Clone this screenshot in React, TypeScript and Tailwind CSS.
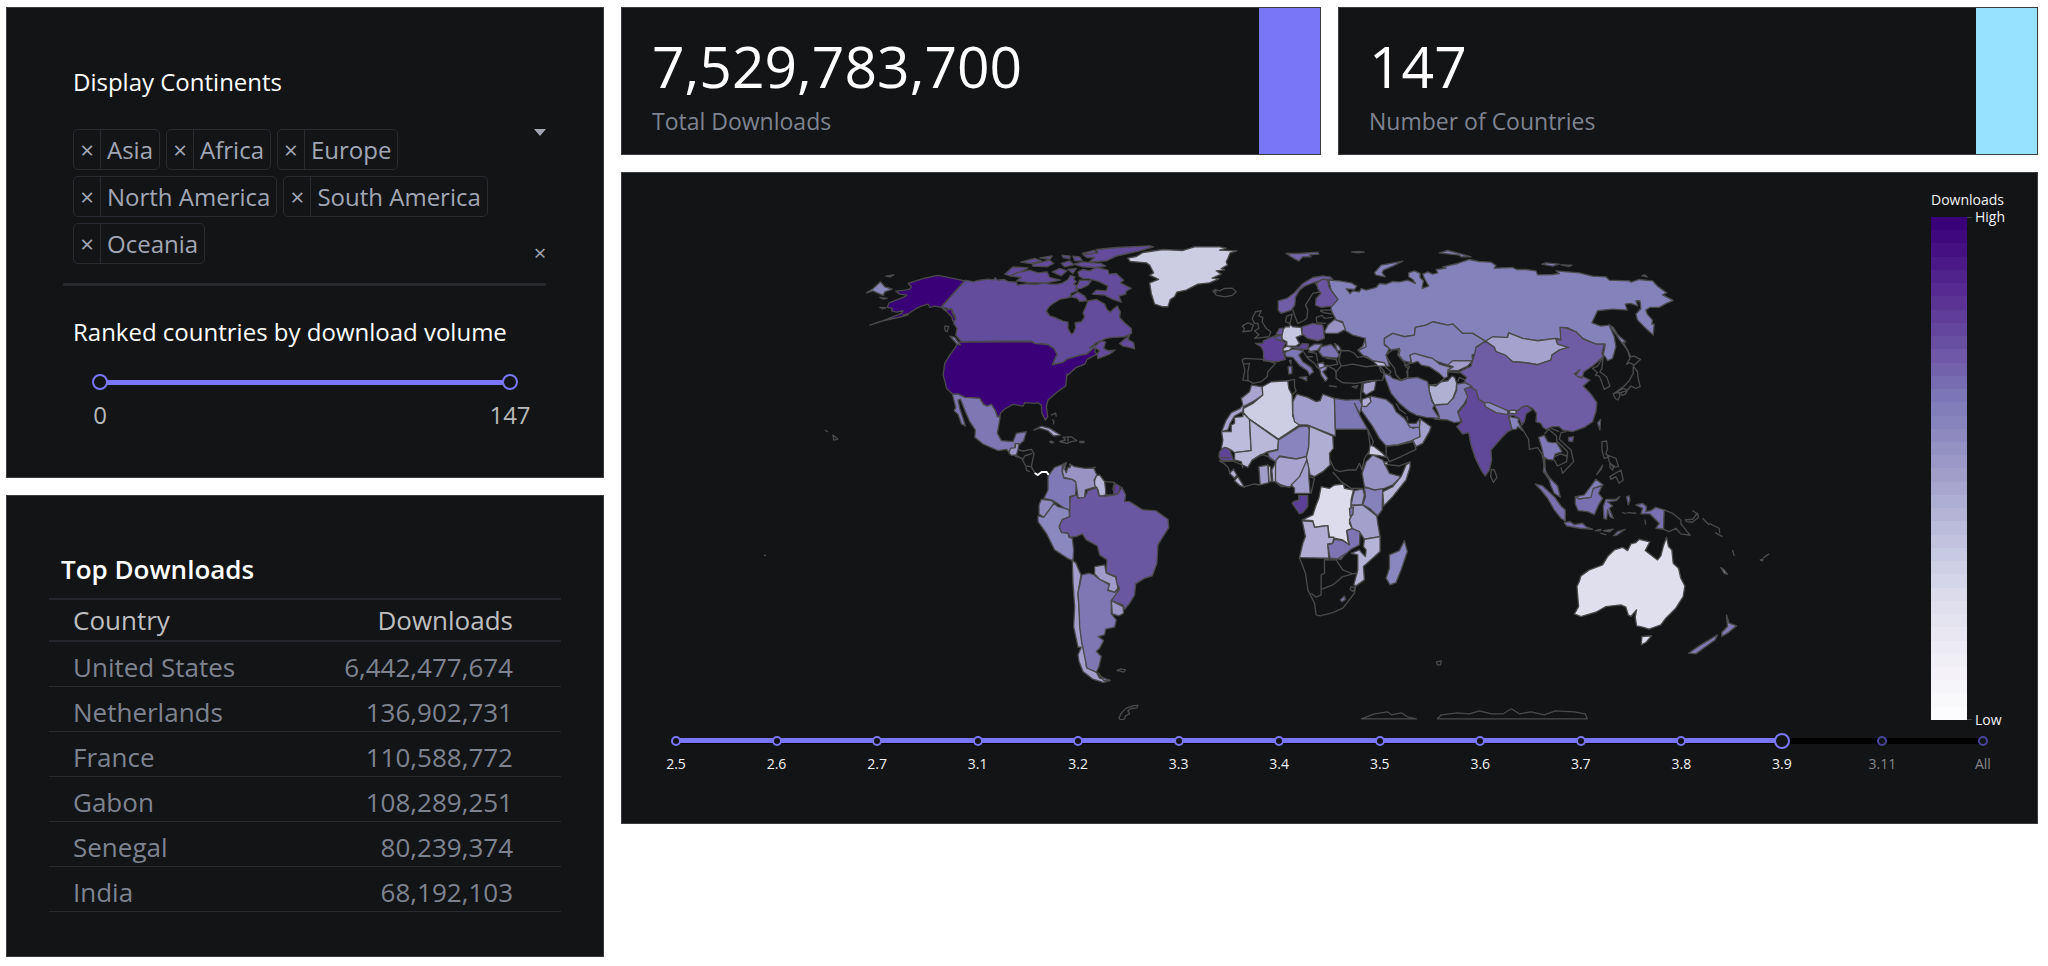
import React, { useState } from 'react';

type Shape = [fill: string, d: string];
type MapTile = { transform: string; shapes: Shape[] };

const NONE = 'none';

const tiles: MapTile[] = [
  {
    transform: 'translate(850 220) scale(0.33333)',
    shapes: [
      ['#634c9b', 'M347,180 372,185 385,181 415,177 432,179 437,173 443,180 462,178 475,184 500,186 503,195 530,191 560,193 585,189 600,192 625,192 640,188 655,178 662,166 676,170 672,178 680,184 672,192 688,200 682,212 665,218 660,232 630,238 610,250 598,260 590,272 600,287 615,292 640,303 655,306 655,325 664,341 672,338 678,322 676,308 695,305 705,290 700,278 708,262 715,242 740,238 765,252 772,268 782,276 790,268 803,258 812,275 810,292 825,308 845,325 846,340 825,350 790,352 770,355 740,368 720,384 738,376 755,362 768,366 762,385 775,392 797,390 780,402 745,416 742,402 750,392 738,384 730,385 712,402 690,406 650,418 640,427 608,434 622,402 612,385 595,374 555,370 545,363 335,365 318,345 322,325 312,310 318,290 305,268 275,260Z'],
      ['#3a0078', 'M345,182 275,260 290,270 305,266 308,280 318,298 310,304 306,290 292,276 275,262 255,258 240,262 235,252 215,258 200,265 180,278 160,285 175,284 155,290 100,302 60,315 110,298 155,280 160,272 140,276 125,272 128,265 112,262 118,248 160,232 172,225 150,222 138,213 165,210 180,207 185,200 175,190 205,180 225,174 265,166 310,175Z'],
      ['#3a0078', 'M322,372 330,366 545,365 555,370 595,374 612,385 622,402 608,434 640,427 650,418 690,406 712,402 730,385 738,384 735,395 742,402 712,418 706,432 680,442 665,455 655,465 652,462 648,498 620,518 595,540 590,560 594,590 587,600 577,580 575,555 565,548 555,550 525,548 520,558 490,553 465,567 452,580 450,592 442,586 435,570 425,553 415,558 405,557 390,535 345,532 325,522 308,522 290,505 286,485 280,465 285,430 300,405 315,385Z'],
      ['#7f77b4', 'M308,523 325,522 345,532 390,535 400,552 412,558 425,553 437,572 443,590 451,592 443,640 455,662 490,665 500,640 530,635 522,662 510,672 497,672 495,685 480,698 470,688 445,692 400,672 375,652 377,630 360,605 345,570 332,537 325,540 330,565 340,595 347,618 335,612 325,583 313,572 318,562Z'],
      ['#9b97c8', 'M497,670 508,672 505,688 500,705 485,706 478,700 482,685 497,683Z'],
      [NONE, 'M507,690 520,693 545,688 553,700 545,740 M500,706 520,718 525,708 548,700 M515,714 528,738 545,740 556,760 M528,742 532,752 540,755 M508,712 496,708'],
      ['#a8a5cf', 'M552,630 575,618 600,625 632,645 612,648 595,632 570,624Z'],
      ['#a8a5cf', 'M600,665 606,663 612,667 606,669Z'],
      [NONE, 'M630,664 648,660 640,652 665,650 682,662 665,665 652,670 635,666Z M655,652 655,665 M690,664 703,664 703,668 692,668Z M604,585 618,579 620,590 M608,598 613,604 611,613'],
      ['#634c9b', 'M810,370 840,345 835,358 852,368 855,386 840,382 820,378Z'],
      ['#634c9b', 'M465,162 490,140 535,143 515,155 505,165 485,168Z'],
      ['#634c9b', 'M480,167 505,157 540,150 565,158 592,155 600,172 632,180 590,188 545,188 500,182 515,172Z'],
      ['#634c9b', 'M513,126 555,115 575,122 545,130Z M548,133 600,120 612,130 592,140 550,138Z M570,113 608,107 600,118Z M637,105 662,108 660,116 640,112Z M635,130 660,122 672,134 645,140Z M608,155 630,145 652,152 635,167Z M670,108 690,110 698,122 675,122Z M655,148 680,145 670,160Z'],
      ['#634c9b', 'M740,88 800,82 900,77 912,80 870,92 835,100 800,108 770,122 720,125 735,112 712,112 700,104 745,98Z'],
      ['#634c9b', 'M672,132 700,125 755,130 768,138 740,142 700,140Z M698,100 735,90 740,98 718,102Z'],
      ['#634c9b', 'M685,155 700,148 720,152 740,142 775,150 778,162 800,160 822,180 812,188 845,205 830,212 828,222 808,228 815,246 790,238 765,225 728,222 740,210 770,212 775,198 750,185 720,176 700,175 688,168Z'],
      ['#634c9b', 'M690,180 725,182 715,195 695,205 678,207Z M662,230 685,216 705,228 712,242 690,244 682,234Z'],
      ['#7f77b4', 'M300,348 315,352 332,375 322,372 Z'],
      [NONE, 'M285,318 297,319 292,335 286,332Z'],
      ['#8a87bf', 'M50,218 70,205 92,185 105,200 127,207 105,215 100,226 82,218 70,212Z'],
      ['#634c9b', 'M108,168 132,164 122,170Z M90,232 112,235 100,237Z M90,262 108,263 98,266Z'],
    ],
  },
  {
    transform: 'translate(1000 440) scale(0.33333)',
    shapes: [
      ['#7f7ab7', 'M145,110 155,95 165,82 185,75 200,68 188,78 187,95 193,115 218,118 230,128 228,165 210,170 212,205 205,210 195,205 165,185 155,180 133,175 145,150Z'],
      ['#9893c3', 'M200,68 192,80 188,95 193,112 218,118 228,125 232,150 235,172 245,176 255,172 257,150 290,140 283,120 292,105 282,84 255,85 225,80 210,72 212,82 204,84 200,98 195,88Z'],
      ['#b6b5d9', 'M290,108 300,105 315,125 318,150 318,165 300,170 295,150 285,135 285,122Z'],
      [NONE, 'M315,125 345,127 340,145 345,165 320,165 M280,82 288,82'],
      ['#5c3f98', 'M345,130 362,140 355,162 342,164Z'],
      ['#6a57a1', 'M255,172 265,152 292,143 298,168 320,168 345,165 355,162 367,142 378,165 375,185 390,185 430,210 468,212 505,238 508,262 490,290 475,315 472,370 458,408 435,415 408,432 405,465 390,490 375,508 370,495 335,482 360,445 350,430 350,410 320,398 322,360 300,345 293,318 260,300 248,282 230,290 210,292 205,280 185,278 178,260 188,238 210,230 212,172 230,165 236,175Z'],
      ['#8d88be', 'M118,195 125,178 155,182 163,188 155,205 145,215 132,232 118,222Z'],
      ['#8b87bf', 'M115,228 132,232 145,215 163,190 175,200 195,205 208,210 210,230 188,238 178,260 185,278 205,280 208,292 218,295 222,330 220,362 205,356 165,330 140,280 115,245Z'],
      ['#a39ecb', 'M218,362 228,368 244,405 235,460 238,500 242,560 247,610 258,650 260,680 290,697 300,715 330,722 310,728 280,718 250,695 238,665 235,645 245,622 235,622 230,598 222,560 225,500 220,430Z'],
      ['#7e77b4', 'M247,405 268,400 283,405 300,418 330,435 325,452 345,457 360,448 335,482 335,522 350,540 345,562 318,568 315,585 296,590 312,602 300,625 290,635 305,650 298,680 290,697 262,685 255,650 245,600 240,560 238,500 235,460Z'],
      ['#8b87bf', 'M297,700 305,712 332,722 312,722Z'],
      ['#a09bc9', 'M285,380 315,375 320,400 348,412 355,445 345,457 325,450 330,432 300,418 285,402Z'],
      ['#9b96c6', 'M335,482 370,500 372,520 358,528 338,522Z'],
      [NONE, 'M352,692 363,687 378,690 372,697 362,694Z M358,835 365,820 380,805 400,798 415,796 412,804 395,806 385,812 390,822 378,828 375,838 362,840Z'],
    ],
  },
  {
    transform: 'translate(1380 240) scale(0.33333)',
    shapes: [
      ['#8581ba', 'M-152,120 -120,122 -85,128 -68,138 -75,148 -100,146 -88,160 -80,152 -60,155 -55,145 -40,150 -10,142 0,130 20,132 40,124 60,125 85,120 108,130 100,118 88,110 88,98 105,92 122,100 122,112 132,122 128,145 148,138 135,115 130,102 145,95 160,102 175,98 170,88 200,84 190,80 235,70 270,58 300,64 335,66 350,76 345,84 400,82 412,88 440,88 470,92 475,104 520,103 540,100 530,92 600,98 640,108 680,110 690,120 750,122 755,126 780,118 820,122 835,138 862,158 850,164 882,181 865,188 840,202 812,202 800,210 804,222 820,240 818,252 825,252 822,285 800,265 775,240 770,222 785,205 782,182 770,182 776,198 755,190 738,192 744,210 700,207 655,212 638,248 665,258 690,255 705,290 710,320 700,355 685,362 678,350 672,345 678,312 650,312 610,295 590,275 565,263 545,262 545,298 530,295 475,302 430,295 388,278 385,292 318,303 280,280 250,280 220,252 205,255 160,245 140,255 108,262 105,285 75,290 40,280 15,295 15,315 30,325 20,345 30,378 15,378 -20,362 -45,350 -65,330 -50,318 -42,295 -80,285 -105,270 -110,245 -130,240 -145,210 -145,190 -125,178 -145,150Z'],
      ['#8581ba', 'M-10,105 -15,98 5,75 70,63 40,78 12,90 8,98 18,110Z'],
      ['#8581ba', 'M180,38 205,31 240,40 275,50 245,50 240,45Z M488,72 500,68 540,72 520,78Z M545,74 578,75 570,79Z M788,107 796,104 804,110Z'],
      ['#8581ba', 'M690,254 702,262 716,285 740,305 732,306 746,332 722,300Z'],
      ['#827eb8', 'M15,295 40,280 75,290 105,285 108,262 140,255 160,245 205,255 220,252 250,280 280,280 318,303 290,322 290,340 278,345 280,362 240,365 205,375 175,365 140,350 105,342 92,345 95,368 70,362 55,345 60,325 35,330 15,312Z'],
      ['#8e89c0', 'M92,345 105,340 140,350 160,355 180,372 200,378 225,385 205,395 205,410 195,415 180,400 150,380 125,375 115,364 97,370Z'],
      ['#a09bc9', 'M205,375 220,362 280,362 265,378 235,392 205,390 222,380Z'],
      [NONE, 'M20,345 40,328 62,330 58,345 72,362 78,372 90,380 82,395 85,412 65,420 50,405 45,385 28,362Z M95,370 75,375 85,385 85,415 110,412 150,435 175,432 195,415 M205,395 250,398 M235,425 240,412 258,420'],
      ['#a5a2cd', 'M318,303 340,290 385,292 388,278 430,295 475,302 530,295 535,312 568,322 540,330 518,345 515,360 475,374 440,368 400,365 375,345 350,335 345,322Z'],
      ['#6e5da5', 'M318,303 345,322 350,335 378,345 400,365 440,368 475,374 515,360 518,345 540,330 568,322 535,312 530,298 545,300 542,262 560,264 590,275 612,297 650,312 675,312 668,340 672,350 655,365 640,378 614,395 608,415 590,406 602,388 585,402 600,412 612,410 632,420 612,438 635,462 653,488 650,515 640,545 615,562 580,575 550,570 540,560 520,560 500,568 490,560 485,550 470,545 472,520 460,505 445,498 430,500 415,512 385,512 345,505 318,490 298,478 290,460 275,438 255,425 262,412 240,395 275,378 285,345 290,322Z'],
      ['#614999', 'M255,445 270,440 290,450 298,478 315,488 318,498 350,515 385,522 388,512 415,512 430,500 445,498 457,510 440,522 435,545 428,555 420,535 400,525 388,530 395,560 400,568 385,575 370,590 335,630 337,660 330,690 318,708 308,695 288,655 275,615 268,578 250,582 232,560 248,545 235,520 260,490 262,465Z'],
      ['#8d88bf', 'M315,488 330,488 385,512 385,524 350,518 318,500Z'],
      ['#c0c0dd', 'M390,512 408,510 412,520 392,520Z'],
      ['#8783bc', 'M388,528 400,532 418,535 416,545 422,555 430,572 416,560 410,568 398,568Z'],
      ['#827db7', 'M165,537 180,530 175,515 165,495 200,492 210,480 222,475 232,450 232,432 255,428 278,438 255,447 265,470 255,490 235,515 245,545 225,548 205,540Z'],
      ['#b0b0d3', 'M148,450 150,435 170,438 185,425 205,422 218,408 226,412 232,430 230,450 220,475 205,492 165,495 158,480Z'],
      [NONE, 'M745,330 755,350 765,348 784,358 765,375 752,368 742,372 752,355Z M762,378 775,395 776,410 783,440 770,445 755,438 745,450 732,445 715,455 705,460 735,438 750,422 762,400Z M702,460 720,458 722,468 716,480 708,475Z M724,458 744,452 738,462 728,466Z M640,385 655,378 672,350 668,385 662,395 682,410 692,438 675,448 665,420 660,408 648,405 655,398Z M336,688 345,690 353,712 342,727 334,710Z'],
    ],
  },
  {
    transform: 'translate(1200 260) scale(0.33333)',
    shapes: [
      [NONE, 'M40,92 50,96 45,88 60,92 75,85 98,84 110,95 98,106 75,110 50,105Z'],
      ['#6f5da6', 'M236,122 236,150 245,160 275,150 286,135 288,110 300,90 315,78 340,68 355,64 370,58 400,58 392,50 370,47 340,52 310,70 285,98 262,115Z'],
      [NONE, 'M280,148 285,165 295,190 312,182 322,175 325,150 318,135 340,100 362,95 M355,80 345,65'],
      ['#6a55a0', 'M352,68 370,57 385,60 388,80 398,95 415,118 398,138 365,142 348,135 350,115 364,100 355,85Z'],
      ['#7d77b4', 'M552,340 570,345 580,355 605,362 625,355 655,352 685,365 690,395 698,425 705,435 700,445 720,475 680,472 650,465 630,455 600,430 575,400Z'],
      ['#8c88c0', 'M515,408 560,418 580,435 590,455 615,475 625,490 640,505 660,500 662,530 650,538 595,555 560,558 540,535 520,500 485,450 485,430 505,435Z'],
      [NONE, 'M560,558 595,555 642,545 650,568 600,592 570,605 560,585Z M590,430 600,448 620,462 M622,468 626,482'],
      ['#a4a0cc', 'M662,476 695,500 690,515 670,550 650,560 640,540 662,530 660,500Z'],
      ['#8883bc', 'M625,490 650,490 662,475 660,502 632,502Z'],
      ['#a4a0cb', 'M492,370 530,362 525,390 500,405 490,395Z'],
      ['#b0acd3', 'M488,418 510,410 515,425 500,440 487,438Z'],
      [NONE, 'M488,368 484,400 484,450 M410,335 425,318 460,312 500,320 540,315 555,335 550,360 510,362 470,370 430,368 410,355Z M458,380 475,377 470,384Z M388,377 412,380 M520,302 500,288 475,292 465,280 450,272 425,272 418,300 425,318 M478,270 500,260 498,240 M555,318 575,335 568,345 545,335 540,320'],
      ['#bab8d9', 'M520,302 555,308 560,318 535,318Z'],
      ['#6a55a0', 'M308,200 340,190 370,195 375,235 355,242 325,235 308,222Z'],
      ['#c6c6e0', 'M250,208 258,200 270,200 270,192 280,200 305,202 308,225 290,232 300,250 290,258 262,258 262,245 248,238 247,222Z'],
      ['#5f4297', 'M168,250 190,250 192,242 215,232 232,225 240,240 258,248 250,265 250,275 258,298 235,305 192,302 192,275 185,260Z'],
      ['#6750a0', 'M230,222 240,205 252,205 248,225Z'],
      ['#6750a0', 'M222,230 245,226 248,240 238,240Z'],
      ['#c3c2de', 'M250,266 262,258 278,262 270,272 252,273Z'],
      ['#5f4598', 'M278,262 300,260 308,250 328,252 322,268 290,266Z'],
      ['#8883bd', 'M325,265 345,252 368,252 355,270 332,275Z'],
      ['#7b72b1', 'M365,260 395,253 410,268 420,285 412,294 370,290 358,275Z'],
      ['#9b96c6', 'M405,250 418,258 425,270 415,272Z'],
      ['#9893c3', 'M375,215 385,195 405,178 430,188 438,208 415,220 380,220Z'],
      [NONE, 'M352,188 350,172 368,166 375,175 400,172 M362,150 395,150 M362,152 375,158 398,162 M352,188 380,190'],
      ['#7e77b5', 'M255,278 275,268 290,268 312,272 298,285 310,305 335,322 342,336 330,345 324,332 300,316 280,292 260,290Z'],
      ['#7e77b5', 'M300,352 322,350 322,362Z M266,320 277,318 277,340 268,342Z M270,302 275,300 274,312Z'],
      ['#8e89c0', 'M360,325 385,315 380,328 370,335 385,355 378,364 365,345Z'],
      ['#a4a0cb', 'M355,310 372,308 376,320 358,326Z'],
      [NONE, 'M312,275 325,295 345,310 355,325 M325,275 350,280 355,305 M320,290 340,290 M380,295 410,298 415,312 385,318 M385,318 405,328 412,340'],
      [NONE, 'M128,300 135,295 190,298 228,310 205,335 203,350 185,365 160,370 148,362 130,360 136,330Z M150,310 145,335 145,360 M132,312 152,310'],
      [NONE, 'M168,155 185,152 178,168 190,172 188,185 200,205 214,215 208,230 165,235 178,224 165,212 178,205 175,190 165,190 158,175Z M130,215 135,205 128,198 145,188 162,195 155,212Z M258,185 262,168 278,162 272,190Z'],
      ['#a8a4cf', 'M188,380 190,405 160,425 132,440 130,455 105,468 92,490 85,510 66,515 80,480 95,458 122,445 130,435 125,415 150,395 156,375 175,378Z'],
      ['#bdbcdc', 'M66,515 95,515 95,495 105,490 105,472 130,470 130,458 150,478 155,572 105,578 95,570 80,563 65,568 70,540Z'],
      ['#cdcde3', 'M188,380 215,365 265,362 268,385 278,405 280,470 300,495 237,537 150,478 132,458 132,445 160,430 190,405Z'],
      [NONE, 'M265,362 285,358 285,380 290,392 278,405'],
      ['#a29ecb', 'M280,425 292,402 325,412 350,425 362,422 370,402 405,415 408,528 325,495 300,495 285,485 280,460Z'],
      ['#7e77b6', 'M405,415 440,420 480,418 488,435 480,460 465,430 482,468 505,508 408,508Z'],
      ['#b9b8d9', 'M150,478 237,540 235,568 205,575 175,590 158,600 145,622 128,615 125,605 105,600 105,578 155,572Z'],
      ['#8984bd', 'M237,540 300,500 325,498 330,510 328,560 320,590 290,597 240,588 228,605 210,595 205,578 235,570Z'],
      ['#b0aed3', 'M330,498 400,528 402,565 390,580 392,615 370,635 345,650 332,645 320,595 328,560Z'],
      ['#5f4598', 'M60,575 75,562 90,568 102,602 65,602 58,590Z'],
      [NONE, 'M62,595 75,592 90,594 M408,508 505,508 522,545 512,570 495,595 488,630 480,610 470,630 445,630 420,635 405,628 392,600 M400,636 425,665 455,685 490,685 M330,650 345,655 335,700 M160,600 185,583 208,590 228,605'],
      ['#a8a4cf', 'M230,600 240,590 290,597 320,590 325,610 305,645 290,665 270,682 245,675 228,665 225,630Z'],
      ['#a29ecb', 'M322,600 328,625 328,650 332,700 285,700 285,685 275,675 300,650Z'],
      ['#a19dc9', 'M178,620 205,615 208,668 182,675Z'],
      ['#ebeaf3', 'M207,618 213,620 215,665 209,665Z'],
      ['#b5b4d8', 'M217,630 228,608 228,665 220,665Z'],
      ['#b4b2d7', 'M90,640 102,628 112,645 105,655Z'],
      ['#bcbada', 'M105,662 115,650 135,682 120,676Z'],
      [NONE, 'M58,602 75,612 85,622 92,640 M135,680 165,672 180,675 M65,605 100,603 128,615 130,625 M228,665 245,680 275,680'],
      ['#5c3f96', 'M282,725 298,720 298,706 325,706 325,740 310,758 300,762 285,740 278,730Z'],
      ['#dddcec', 'M365,680 390,685 405,675 432,672 435,685 462,690 455,720 455,760 450,790 458,806 442,812 445,840 450,855 430,840 390,832 385,797 345,802 340,782 308,780 340,765 350,735 358,715Z'],
      ['#b0acd3', 'M308,783 340,785 345,802 385,797 388,832 403,832 400,850 385,852 388,895 300,893 310,850 318,830Z'],
      ['#7e74b3', 'M385,855 400,850 405,838 430,842 450,855 442,812 460,805 482,815 480,855 455,868 435,885 425,898 392,895Z'],
      ['#9b97c7', 'M465,692 490,687 495,705 488,735 455,735 460,710Z'],
      ['#8680bb', 'M495,682 525,690 550,685 548,750 535,768 510,745 490,735 498,710Z'],
      ['#a4a0cc', 'M455,738 490,735 532,768 535,790 542,830 495,838 480,815 458,805 450,780 460,760Z'],
      ['#7d75b3', 'M450,745 462,742 460,765 452,768Z'],
      ['#b5b3d7', 'M495,838 542,830 542,875 520,895 492,920 495,960 470,978 463,975 475,930 475,885 455,880 480,870 488,880 498,890 500,870 492,860Z'],
      ['#8a86bf', 'M615,842 624,875 605,930 590,968 572,975 560,955 570,925 570,885 600,872Z'],
      [NONE, 'M300,893 318,940 325,990 345,1030 350,1065 362,1068 400,1058 430,1045 465,1000 468,978 M375,900 375,940 365,945 365,1005 350,1012 335,1000 M368,988 400,975 430,950 460,942 474,940 M388,895 375,900 410,900 440,880 M410,900 430,930 460,942 M455,980 468,985 460,995 452,988Z'],
      ['#827cba', 'M422,1020 435,1008 438,1018 428,1026Z'],
      ['#9793c4', 'M520,585 550,600 560,620 570,640 605,650 580,675 555,685 525,690 495,680 488,640 500,605Z'],
      ['#cdcce4', 'M512,555 525,560 550,580 560,592 540,587 508,583Z M556,606 564,606 564,614 556,614Z'],
      ['#b7b5d8', 'M632,606 632,622 620,660 580,710 553,738 550,695 580,680 605,650 620,615Z'],
      [NONE, 'M565,614 600,618 632,606 M505,508 512,555'],
    ],
  },
  {
    transform: 'translate(1480 380) scale(0.33333)',
    shapes: [
      ['#7f7ab7', 'M178,172 195,166 205,185 218,188 232,188 248,215 228,222 222,240 205,238 196,232 198,270 205,285 215,298 208,295 192,275 195,240 188,205Z'],
      [NONE, 'M122,135 148,178 150,208 175,203 188,222 196,262 M195,162 208,148 232,168 232,182 265,215 262,245 235,258 225,240 M225,230 245,222 262,228 M215,145 240,155 M262,155 245,158 240,178 275,210 283,245 250,280 245,262'],
      ['#7e78b6', 'M192,272 215,298 235,318 243,352 225,340 215,318 210,300Z'],
      ['#7a70b0', 'M168,312 190,318 225,350 245,378 258,390 258,424 245,415 225,390 205,355 185,330Z'],
      ['#7a70b0', 'M255,428 272,425 285,434 310,430 320,440 340,448 300,445 262,438Z M348,452 365,448 362,453Z M372,452 402,448 390,456Z M403,467 415,455 438,448 412,466Z M365,460 380,464Z'],
      ['#7870b0', 'M288,350 300,357 332,352 342,325 368,318 358,340 370,355 358,375 345,404 325,395 297,392 288,372Z'],
      ['#827eb9', 'M290,350 315,345 350,298 372,315 342,325 335,352 300,357Z'],
      ['#7870b0', 'M372,380 380,358 410,358 422,350 412,362 385,365 400,378 390,385 402,415 392,410 385,390 382,418 374,415Z M442,350 450,348 452,360 447,375Z M430,398 440,400Z M445,398 470,400Z M497,420 499,432Z'],
      ['#7870b0', 'M470,375 490,370 502,380 500,395 515,392 530,382 555,390 553,448 530,445 540,430 512,402 485,402 490,385Z'],
      [NONE, 'M555,390 580,400 605,420 605,432 633,466 605,462 590,445 570,455 553,448 M618,420 640,418 655,400 658,412 640,427 622,425Z M640,392 655,402 M670,415 690,435 M690,430 720,445 722,460 M708,458 730,470 M760,510 765,528 M852,534 870,522'],
      ['#cccce2', 'M843,540 852,538 850,543Z M725,563 733,568 745,583 735,580Z'],
      ['#e0dfed', 'M285,702 298,680 293,620 300,605 305,588 330,570 370,555 385,530 405,510 430,502 445,512 455,492 470,488 480,478 512,486 498,512 535,540 545,528 552,500 562,472 568,500 578,510 582,550 598,565 605,595 617,618 612,650 590,685 560,715 545,735 510,748 490,742 472,738 468,712 472,690 455,710 447,705 440,682 425,675 380,680 350,697 305,710Z'],
      ['#e0dfed', 'M488,770 517,768 500,788 486,795Z'],
      ['#827ab7', 'M742,705 750,730 772,738 745,760 728,770 728,758 745,740Z M715,765 708,780 680,800 650,822 628,820 660,798Z'],
      ['#827ab7', 'M355,128 364,118 362,150Z'],
      ['#6e5da5', 'M268,172 283,170 280,185 268,183Z'],
      [NONE, 'M368,185 382,183 385,205 380,222 390,230 375,235 368,210Z M385,225 410,235 418,260 402,262 390,245Z M392,250 405,258 400,270 392,262Z M392,290 425,270 432,300 420,310 410,290 395,298Z M352,284 370,256 366,268Z'],
    ],
  },
  {
    transform: 'translate(1040 230) scale(0.33333)',
    shapes: [
      ['#cccce2', 'M264,84 290,79 310,67 370,58 430,61 465,50 540,50 560,54 540,60 592,62 572,68 565,85 560,95 564,105 545,115 556,119 530,122 545,132 518,144 538,146 510,158 475,162 440,180 412,186 405,200 392,208 385,230 370,230 345,222 335,190 330,158 357,148 330,135 342,128 330,105 320,98 272,94Z'],
      ['#7566aa', 'M740,70 780,70 835,66 838,72 810,74 815,80 790,80 778,93 755,80Z'],
      [NONE, 'M936,65 955,68 975,66 960,64Z'],
    ],
  },
  {
    transform: 'translate(0 0)',
    shapes: [
      [NONE, 'M825,430 828,432 M833,435 838,439 834,440Z M764,555 766,556 M1437,662 1442,661 1441,665 1438,665Z'],
      [NONE, 'M1362,719 1375,714 1388,712 1392,715 1402,713 1408,717 1417,719Z M1438,719 1442,715 1458,713 1470,714 1480,711 1492,714 1504,714 1512,709 1520,714 1532,712 1545,715 1556,711 1575,712 1586,714 1588,719Z'],
    ],
  },
];

function WorldMap() {
  return (
    <svg
      viewBox="622 190 1310 530"
      className="h-[530px] min-w-0 flex-1"
      role="img"
      aria-label="World map of downloads by country"
      stroke="#4a4a4a"
      strokeLinejoin="round"
    >
      {tiles.map((tile) => (
        <g key={tile.transform} transform={tile.transform} strokeWidth={tile.transform === 'translate(0 0)' ? 1.3 : 4}>
          {tile.shapes.map(([fill, d]) => (
            <path key={d} fill={fill} d={d} />
          ))}
        </g>
      ))}
      <path d="M1035,473 1038,475 1042,472 1047,472 1049,475" fill="none" stroke="#fcfbfd" strokeWidth="2" />
    </svg>
  );
}

const continents = ['Asia', 'Africa', 'Europe', 'North America', 'South America', 'Oceania'];

const topDownloads: [string, string][] = [
  ['United States', '6,442,477,674'],
  ['Netherlands', '136,902,731'],
  ['France', '110,588,772'],
  ['Gabon', '108,289,251'],
  ['Senegal', '80,239,374'],
  ['India', '68,192,103'],
];

const versions = ['2.5', '2.6', '2.7', '3.1', '3.2', '3.3', '3.4', '3.5', '3.6', '3.7', '3.8', '3.9', '3.11', 'All'];

const thumb =
  'appearance-none bg-transparent pointer-events-none [&::-webkit-slider-thumb]:pointer-events-auto [&::-webkit-slider-thumb]:h-4 [&::-webkit-slider-thumb]:w-4 [&::-webkit-slider-thumb]:appearance-none [&::-webkit-slider-thumb]:rounded-full [&::-webkit-slider-thumb]:border-2 [&::-webkit-slider-thumb]:border-[#7a76f8] [&::-webkit-slider-thumb]:bg-[#131416]';

function Continents() {
  const [items, setItems] = useState(continents);
  return (
    <div className="mt-[26px] -ml-[10px] flex h-[162px] w-[483px] max-w-full justify-between border-b-[3px] border-[#27282c] pt-[5px] pl-[10px]">
      <ul className="flex min-w-0 flex-1 flex-wrap content-start gap-[6px]">
        {items.map((name) => (
          <li key={name} className="flex h-[41px] rounded-[5px] border border-[#2a2b30] text-[24px] leading-[40px] text-[#a2a6b4]">
            <button
              type="button"
              aria-label={`Remove ${name}`}
              className="w-[27px] border-r border-[#2a2b30] text-center leading-[36px]"
              onClick={() => setItems(items.filter((i) => i !== name))}
            >
              ×
            </button>
            <span className="px-[6px]">{name}</span>
          </li>
        ))}
      </ul>
      <div className="flex w-3 flex-col items-center justify-between pb-4 text-[#a2a6b4]">
        <button type="button" aria-label="Open list">
          <svg width="12" height="7" viewBox="0 0 12 7" className="block">
            <path d="M0 0H12L6 7Z" fill="#a2a6b4" />
          </svg>
        </button>
        <button type="button" aria-label="Clear all" className="text-[22px] leading-[30px]" onClick={() => setItems([])}>
          ×
        </button>
      </div>
    </div>
  );
}

function RankSlider() {
  const [low, setLow] = useState(0);
  const [high, setHigh] = useState(147);
  return (
    <div className="mt-[24px] ml-[19px] w-[426px] max-w-full">
      <div className="relative flex h-5 items-center px-2">
        <div className="h-[5px] w-full bg-[#7a76f8]" />
        <input type="range" aria-label="Lowest rank" min={0} max={147} value={low} onChange={(e) => setLow(+e.target.value)} className={`absolute inset-0 w-full ${thumb}`} />
        <input type="range" aria-label="Highest rank" min={0} max={147} value={high} onChange={(e) => setHigh(+e.target.value)} className={`absolute inset-0 w-full ${thumb}`} />
      </div>
      <div className="mt-[7px] flex justify-between text-[24px] leading-[32px] text-[#b9b9bb]">
        <span className="flex w-4 justify-center">{low}</span>
        <span className="flex w-4 justify-center">{high}</span>
      </div>
    </div>
  );
}

function VersionSlider() {
  const [index, setIndex] = useState(11);
  const last = versions.length - 1;
  return (
    <div className="mt-[11px] px-[46px]">
      <div className="relative h-5">
        <div className="absolute inset-x-2 top-[7px] h-[6px] bg-black">
          <div className="h-[5px] bg-[#7a76f8]" style={{ width: `${(index / last) * 100}%` }} />
        </div>
        <div className="absolute inset-0 flex items-center justify-between">
          {versions.map((v, i) => (
            <span key={v} className="flex w-4 justify-center">
              <span className={`h-[10px] w-[10px] rounded-full border-2 bg-[#131416] ${i <= index ? 'border-[#7a76f8]' : 'border-[#48449a]'}`} />
            </span>
          ))}
        </div>
        <input type="range" aria-label="Python version" min={0} max={last} value={index} onChange={(e) => setIndex(+e.target.value)} className={`absolute inset-0 w-full ${thumb}`} />
      </div>
      <div className="mt-[3px] flex justify-between text-[14px] leading-5 font-medium">
        {versions.map((v, i) => (
          <span key={v} className={`flex w-4 justify-center ${i <= index ? 'text-[#f2f2f2]' : 'text-[#85868a]'}`}>
            {v}
          </span>
        ))}
      </div>
    </div>
  );
}

const purples = [
  [58, 0, 120],
  [84, 39, 143],
  [106, 81, 163],
  [128, 125, 186],
  [158, 154, 200],
  [188, 189, 220],
  [218, 218, 235],
  [239, 237, 245],
  [252, 251, 253],
];

const bandCount = 38;

const bands = Array.from({ length: bandCount }, (_, i) => {
  const position = (i / (bandCount - 1)) * (purples.length - 1);
  const from = Math.min(Math.floor(position), purples.length - 2);
  const t = position - from;
  const rgb = purples[from].map((c, k) => Math.round(c + (purples[from + 1][k] - c) * t));
  return `rgb(${rgb.join(',')})`;
});

function ColorBar() {
  return (
    <div className="w-[106px] text-[14px] leading-5 font-medium text-[#f2f2f2]">
      <div>Downloads</div>
      <div className="mt-[7px] flex h-[503px]">
        <div className="flex w-9 flex-col">
          {bands.map((color) => (
            <div key={color} className="flex-1" style={{ backgroundColor: color }} />
          ))}
        </div>
        <div className="w-[5px] border-y border-[#444]" />
        <div className="-my-[10px] ml-[3px] flex flex-col justify-between">
          <span>High</span>
          <span>Low</span>
        </div>
      </div>
    </div>
  );
}

function Stat({ value, label, accent }: { value: string; label: string; accent: string }) {
  return (
    <section className="flex h-[148px] justify-between border border-[#3a3b3f] bg-[#131416]">
      <div className="pt-[19px] pl-[30px]">
        <div className="text-[57px] leading-[78px] text-white">{value}</div>
        <div className="text-[23px] leading-[32px] text-[#7f838f]">{label}</div>
      </div>
      <div className={`w-[61px] ${accent}`} />
    </section>
  );
}

export default function App() {
  return (
    <main className="grid grid-cols-[598fr_1417fr] items-start gap-[17px] bg-white pt-[7px] pr-[10px] pb-[9px] pl-[6px] font-['Open_Sans','Noto_Sans',sans-serif]">
      <div className="flex min-w-0 flex-col gap-[17px]">
        <section className="h-[471px] border border-[#3a3b3f] bg-[#131416] pt-[58px] pl-[66px]">
          <h2 className="text-[24px] leading-[32px] text-white">Display Continents</h2>
          <Continents />
          <h2 className="mt-[30px] text-[24px] leading-[32px] text-white">Ranked countries by download volume</h2>
          <RankSlider />
        </section>
        <section className="h-[462px] border border-[#3a3b3f] bg-[#131416] px-[42px] pt-[53px]">
          <h2 className="pl-[12px] text-[26px] leading-[40px] font-semibold text-white">Top Downloads</h2>
          <table className="mt-[9px] w-full border-collapse text-[26px] leading-[36px]">
            <thead>
              <tr className="h-[42px] border-y-2 border-[#24252b] text-[#bfbfc0]">
                <th scope="col" className="pl-[24px] text-left font-normal">Country</th>
                <th scope="col" className="pr-[48px] text-right font-normal">Downloads</th>
              </tr>
            </thead>
            <tbody>
              {topDownloads.map(([country, count]) => (
                <tr key={country} className="h-[45px] border-b border-[#2a2b30] text-[#7f838f]">
                  <td className="pt-[6px] pl-[24px]">{country}</td>
                  <td className="pt-[6px] pr-[48px] text-right">{count}</td>
                </tr>
              ))}
            </tbody>
          </table>
        </section>
      </div>
      <div className="flex min-w-0 flex-col gap-[17px]">
        <div className="grid grid-cols-2 gap-[17px]">
          <Stat value="7,529,783,700" label="Total Downloads" accent="bg-[#7a76f8]" />
          <Stat value="147" label="Number of Countries" accent="bg-[#97e2ff]" />
        </div>
        <section className="h-[652px] border border-[#3a3b3f] bg-[#131416] pt-[17px]">
          <div className="flex">
            <WorldMap />
            <ColorBar />
          </div>
          <VersionSlider />
        </section>
      </div>
    </main>
  );
}
